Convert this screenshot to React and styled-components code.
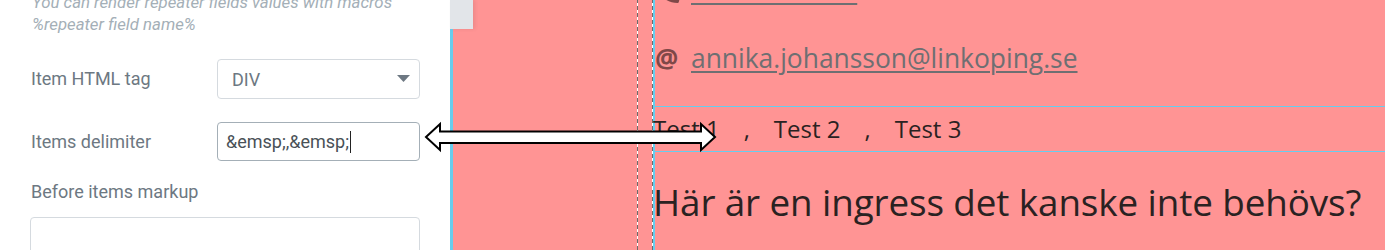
import React from 'react';
import styled, { createGlobalStyle } from 'styled-components';
import { FaPhoneAlt } from 'react-icons/fa';

const Global = createGlobalStyle`
  html, body { margin: 0; padding: 0; }
  body { width: 1385px; height: 250px; overflow: hidden; background: #fff; }
  * { box-sizing: border-box; }
`;

const Page = styled.div`
  position: relative;
  display: flex;
  width: 1385px;
  height: 250px;
  overflow: hidden;
`;

const Panel = styled.aside`
  width: 450px;
  flex: none;
  background: #fff;
  font-family: Roboto, "Liberation Sans", sans-serif;
  padding: 0 30px;
  display: flex;
  flex-direction: column;
`;

const Hint = styled.p`
  margin: -9px 0 0 2px;
  font-style: italic;
  font-size: 16.8px;
  line-height: 22px;
  color: #a4afb7;
`;

const ControlRow = styled.div`
  display: flex;
  align-items: center;
  justify-content: space-between;
  margin-top: ${p => p.$top}px;
`;

const Label = styled.div`
  font-size: 18px;
  line-height: 22px;
  color: #6d7882;
  padding-left: 1px;
  margin-top: ${p => p.$top || 0}px;
`;

const Select = styled.div`
  width: 203px;
  height: 40px;
  border: 1px solid #d5dadf;
  border-radius: 4px;
  display: flex;
  align-items: center;
  justify-content: space-between;
  padding: 0 8px 0 14px;
  font-size: 18px;
  color: #6d7882;
`;

const TextInput = styled.div`
  width: 203px;
  height: 39px;
  border: 1px solid #a4afb7;
  border-radius: 4px;
  display: flex;
  align-items: center;
  padding: 0 8px;
  font-size: 18px;
  color: #495157;
`;

const Caret = styled.span`
  display: inline-block;
  width: 1px;
  height: 22px;
  background: #222;
  margin-left: 1px;
`;

const TextArea = styled.div`
  margin-top: 14px;
  width: 390px;
  height: 70px;
  border: 1px solid #d5dadf;
  border-radius: 4px;
  flex: none;
`;

const Preview = styled.main`
  flex: 1;
  display: flex;
  background: #ff9494;
  border-left: 3px solid #67cdee;
  font-family: "Open Sans", "Liberation Sans", sans-serif;
`;

const dashed = `repeating-linear-gradient(to bottom, #6b6b6b 0 4px, #ffffff 4px 7px) 1`;

const SideColumn = styled.div`
  width: 185px;
  flex: none;
  border-right: 1px solid transparent;
  border-image: ${dashed};
`;

const MainColumn = styled.div`
  flex: 1;
  margin-left: 14px;
  border-left: 1px solid transparent;
  border-image: ${dashed};
  display: flex;
`;

const Selected = styled.div`
  flex: 1;
  border-left: 2px solid #67cdee;
  display: flex;
  flex-direction: column;
  gap: 28px;
  margin-top: -30px;
`;

const ContactRow = styled.div`
  display: flex;
  align-items: center;
  height: 40px;
  flex: none;
`;

const ContactIcon = styled.span`
  width: 36px;
  flex: none;
  display: flex;
  align-items: center;
  color: #7f4848;
  font-size: 26px;
  font-weight: 700;
  line-height: 40px;
`;

const ContactLink = styled.a`
  font-size: 26.4px;
  line-height: 40px;
  color: #6e6f72;
  text-decoration: underline;
  text-underline-offset: 3px;
  text-decoration-thickness: 1.5px;
`;

const Repeater = styled.div`
  border-top: 1px solid #67cdee;
  border-bottom: 1px solid #67cdee;
  margin-left: -2px;
  padding: 4px 0 4px 0;
  font-size: 24px;
  line-height: 36px;
  color: #2a2222;
  flex: none;
`;

const Ingress = styled.h2`
  margin: 2px 0 0 -2px;
  font-size: 36.8px;
  font-weight: 400;
  line-height: 41px;
  letter-spacing: -0.1px;
  color: #2a2222;
  white-space: nowrap;
`;

const PanelTab = styled.div`
  position: absolute;
  left: 450px;
  top: 0;
  width: 23px;
  height: 29px;
  background: #e2e5e9;
  box-shadow: 2px 0 4px rgba(0, 0, 0, 0.08);
`;

const ArrowSvg = styled.svg`
  position: absolute;
  left: 420px;
  top: 118px;
  overflow: visible;
`;

export default function App() {
  const delim = '\u2003,\u2003';
  return (
    <>
      <Global />
      <Page>
        <Panel>
          <Hint>You can render repeater fields values with macros %repeater field name%</Hint>
          <ControlRow $top={24}>
            <Label>Item HTML tag</Label>
            <Select>
              <span>DIV</span>
              <svg width="14" height="8" viewBox="0 0 14 8">
                <path d="M0 0 H13 L6.5 7 Z" fill="#6d7882" />
              </svg>
            </Select>
          </ControlRow>
          <ControlRow $top={23}>
            <Label>Items delimiter</Label>
            <TextInput>
              <span>&amp;emsp;,&amp;emsp;</span>
              <Caret />
            </TextInput>
          </ControlRow>
          <Label $top={20}>Before items markup</Label>
          <TextArea />
        </Panel>
        <Preview>
          <SideColumn />
          <MainColumn>
            <Selected>
              <ContactRow>
                <ContactIcon><FaPhoneAlt size={25} /></ContactIcon>
                <ContactLink>0730-555 237</ContactLink>
              </ContactRow>
              <ContactRow>
                <ContactIcon>@</ContactIcon>
                <ContactLink>annika.johansson@linkoping.se</ContactLink>
              </ContactRow>
              <Repeater>
                {'Test 1' + delim + 'Test 2' + delim + 'Test 3'}
              </Repeater>
              <Ingress>Här är en ingress det kanske inte behövs?</Ingress>
            </Selected>
          </MainColumn>
        </Preview>
        <PanelTab />
        <ArrowSvg width="300" height="40" viewBox="420 118 300 40">
          <path
            d="M426 137 L440 124 L440 131.5 L701 131.5 L701 124 L715 137 L701 150 L701 143 L440 143 L440 150 Z"
            fill="#fff"
            stroke="#000"
            strokeWidth="2"
            strokeLinejoin="miter"
          />
        </ArrowSvg>
      </Page>
    </>
  );
}
